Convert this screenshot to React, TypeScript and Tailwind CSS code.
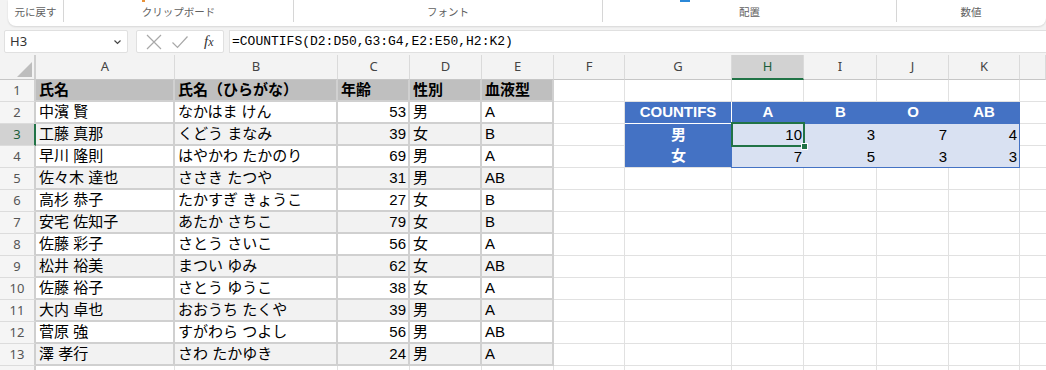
import React from "react";

const JP = '"Liberation Sans","Noto Sans CJK JP",sans-serif';
const UI = '"Noto Sans","Noto Sans CJK JP",sans-serif';

const data: [string, string, string, string, string][] = [
  ["中濱 賢", "なかはま けん", "53", "男", "A"],
  ["工藤 真那", "くどう まなみ", "39", "女", "B"],
  ["早川 隆則", "はやかわ たかのり", "69", "男", "A"],
  ["佐々木 達也", "ささき たつや", "31", "男", "AB"],
  ["高杉 恭子", "たかすぎ きょうこ", "27", "女", "B"],
  ["安宅 佐知子", "あたか さちこ", "79", "女", "B"],
  ["佐藤 彩子", "さとう さいこ", "56", "女", "A"],
  ["松井 裕美", "まつい ゆみ", "62", "女", "AB"],
  ["佐藤 裕子", "さとう ゆうこ", "38", "女", "A"],
  ["大内 卓也", "おおうち たくや", "39", "男", "A"],
  ["菅原 強", "すがわら つよし", "56", "男", "AB"],
  ["澤 孝行", "さわ たかゆき", "24", "男", "A"],
];

const cols = ["A", "B", "C", "D", "E", "F", "G", "H", "I", "J", "K", ""];
const counts: Record<number, string[]> = {
  3: ["10", "3", "7", "4"],
  4: ["7", "5", "3", "3"],
};

function RowHeader({ n }: { n: number }) {
  const sel = n === 3;
  return (
    <div
      className={
        "h-[22px] flex items-center justify-center text-[13px] border-b border-[#dcdcdc] " +
        (sel
          ? "bg-[#d2d2d2] text-[#1b5e3b] border-r-2 border-r-[#217346]"
          : "bg-[#f5f5f5] text-[#555] border-r-2 border-r-[#cfcfcf]")
      }
      style={{ fontFamily: UI }}
    >
      {n <= 13 ? n : ""}
    </div>
  );
}

function TableCell({
  text,
  row,
  align,
}: {
  text: string;
  row: number;
  align: "left" | "right";
}) {
  const bg = row === 1 ? "bg-[#bfbfbf] font-bold" : row % 2 === 1 ? "bg-[#f2f2f2]" : "bg-white";
  return (
    <div
      className={
        "h-[22px] flex items-center pt-px border-r-2 border-b-2 border-[#d0d0d0] text-[15px] text-black overflow-hidden whitespace-nowrap " +
        bg +
        (align === "right" ? " justify-end pr-[2px]" : " pl-[3px]")
      }
      style={{ fontFamily: JP }}
    >
      {text}
    </div>
  );
}

function PlainCell({ extra = "" }: { extra?: string }) {
  return <div className={"h-[22px] border-r border-b border-[#e1e1e1] " + extra} />;
}

function Row({ n }: { n: number }) {
  const cells: React.ReactNode[] = [];
  cells.push(<RowHeader key="h" n={n} />);
  const d =
    n === 1
      ? ["氏名", "氏名（ひらがな）", "年齢", "性別", "血液型"]
      : n <= 13
      ? data[n - 2]
      : null;
  for (let i = 0; i < 5; i++) {
    if (d) {
      cells.push(
        <TableCell
          key={i}
          text={d[i]}
          row={n}
          align={i === 2 && n !== 1 ? "right" : "left"}
        />
      );
    } else {
      cells.push(<PlainCell key={i} />);
    }
  }
  cells.push(<PlainCell key="F" />);
  if (n === 2) {
    cells.push(
      <div
        key="G"
        className="h-[22px] flex items-center justify-center bg-[#4472c4] text-white font-bold text-[15px] border-r border-b border-white"
        style={{ fontFamily: JP }}
      >
        COUNTIFS
      </div>
    );
    ["A", "B", "O", "AB"].forEach((h, i) =>
      cells.push(
        <div
          key={h}
          className={
            "h-[22px] flex items-center justify-center bg-[#4472c4] text-white font-bold text-[15px] border-b border-[#4472c4] " +
            (i === 3 ? "border-r border-r-[#4472c4]" : "")
          }
          style={{ fontFamily: JP }}
        >
          {h}
        </div>
      )
    );
  } else if (n === 3 || n === 4) {
    cells.push(
      <div
        key="G"
        className={
          "h-[22px] flex items-center justify-center bg-[#4472c4] text-white font-bold text-[15px] " +
          (n === 4 ? "border-b border-[#e1e1e1]" : "")
        }
        style={{ fontFamily: JP }}
      >
        {n === 3 ? "男" : "女"}
      </div>
    );
    counts[n].forEach((v, i) =>
      cells.push(
        <div
          key={i}
          className={
            "relative h-[22px] flex items-center pt-px justify-end pr-[2px] bg-[#d9e1f2] text-black text-[15px] " +
            (n === 4 ? "border-b border-[#4472c4] " : "") +
            (i === 3 ? "border-r border-[#4472c4] " : "") +
            (i === 0 ? "border-l border-[#4472c4] -ml-px " : "")
          }
          style={{ fontFamily: JP }}
        >
          {v}
          {n === 3 && i === 0 && (
            <>
              <div className="absolute z-10 left-[-1px] top-[-2px] right-[-1px] bottom-[-1px] border-2 border-[#217346] pointer-events-none" />
              <div className="absolute z-20 right-[-4px] bottom-[-4px] w-[7px] h-[7px] bg-[#217346] border border-white" />
            </>
          )}
        </div>
      )
    );
  } else {
    for (let i = 0; i < 5; i++) cells.push(<PlainCell key={"g" + i} />);
  }
  cells.push(<PlainCell key="L" extra="border-r-0" />);
  return <>{cells}</>;
}

function XIcon() {
  return (
    <svg width="18" height="18" viewBox="0 0 18 18" fill="none" stroke="#a8a8a8" strokeWidth="1.2">
      <path d="M2 2 L16 16 M16 2 L2 16" />
    </svg>
  );
}
function CheckIcon() {
  return (
    <svg width="18" height="18" viewBox="0 0 18 18" fill="none" stroke="#a8a8a8" strokeWidth="1.2">
      <path d="M1.5 9.5 L6.5 14.5 L16.5 3.5" />
    </svg>
  );
}

export default function App() {
  return (
    <div className="w-[1046px] h-[370px] overflow-hidden bg-[#f3f3f3] relative">
      {/* Ribbon */}
      <div className="h-[27px] pl-[8px] bg-[#f3f3f3]">
        <div
          className="relative h-[26px] bg-white rounded-b-[8px] shadow-[0_1px_2px_rgba(0,0,0,0.12)] flex text-[10.5px] text-[#616161]"
          style={{ fontFamily: UI }}
        >
          <div className="absolute left-[134px] top-0 w-[3px] h-[2px] bg-[#e8923a]" />
          <div className="absolute left-[672px] top-0 w-[10px] h-[2px] bg-[#2b88d8]" />
          <div className="w-[56px] flex items-center justify-center pt-[4px] border-r border-[#d6d6d6] h-[22px]">元に戻す</div>
          <div className="w-[230px] flex items-center justify-center pt-[4px] border-r border-[#d6d6d6] h-[22px]">クリップボード</div>
          <div className="w-[309px] flex items-center justify-center pt-[4px] border-r border-[#d6d6d6] h-[22px]">フォント</div>
          <div className="w-[294px] flex items-center justify-center pt-[4px] border-r border-[#d6d6d6] h-[22px]">配置</div>
          <div className="w-[148px] flex items-center justify-center pt-[4px] h-[22px]">数値</div>
        </div>
      </div>
      {/* Formula bar */}
      <div className="h-[28px] flex items-start pt-[3px] pl-[4px]">
        <div
          className="w-[124px] h-[23px] bg-white border border-[#e0e0e0] rounded-[2px] flex items-center justify-between pl-[5px] pr-[5px] text-[13px] text-[#333]"
          style={{ fontFamily: UI }}
        >
          <span>H3</span>
          <svg width="9" height="6" viewBox="0 0 9 6" fill="none" stroke="#444" strokeWidth="1.2">
            <path d="M1.5 1.5 L4.5 4.5 L7.5 1.5" />
          </svg>
        </div>
        <div className="ml-[8px] w-[88px] h-[23px] bg-white border border-[#e0e0e0] rounded-[2px] flex items-center pl-[8px] gap-[8px]">
          <XIcon />
          <CheckIcon />
          <span className="ml-[7px] text-[15px] italic text-[#333]" style={{ fontFamily: '"Liberation Serif",serif' }}>
            f<span className="text-[12px]">x</span>
          </span>
        </div>
        <div
          className="ml-[5px] flex-1 h-[23px] bg-white border border-[#e0e0e0] border-r-0 flex items-center pl-[2px] text-[13px] text-black"
          style={{ fontFamily: '"Liberation Mono",monospace' }}
        >
          =COUNTIFS(D2:D50,G3:G4,E2:E50,H2:K2)
        </div>
      </div>
      {/* Grid */}
      <div className="grid grid-cols-[36px_139px_163px_72px_72px_72px_71px_107px_72px_73px_72px_71px_1fr] bg-white">
        <div className="h-[25px] bg-[#f3f3f3] border-r-2 border-[#cfcfcf] border-b border-b-[#c6c6c6] relative">
          <svg className="absolute right-[2px] bottom-[2px]" width="15" height="15" viewBox="0 0 15 15">
            <path d="M15 0 L15 15 L0 15 Z" fill="#bdbdbd" />
          </svg>
        </div>
        {cols.map((c, i) => {
          const sel = c === "H";
          return (
            <div
              key={i}
              className={
                "h-[25px] flex items-center justify-center text-[13px] " +
                (sel
                  ? "bg-[#d2d2d2] text-[#1b5e3b] border-b-2 border-[#217346] border-r border-r-[#dadada]"
                  : "bg-[#f3f3f3] text-[#444] border-b border-[#c6c6c6] border-r border-r-[#dadada]")
              }
              style={{ fontFamily: UI }}
            >
              {c}
            </div>
          );
        })}
        {Array.from({ length: 14 }, (_, i) => (
          <Row key={i} n={i + 1} />
        ))}
      </div>
    </div>
  );
}
